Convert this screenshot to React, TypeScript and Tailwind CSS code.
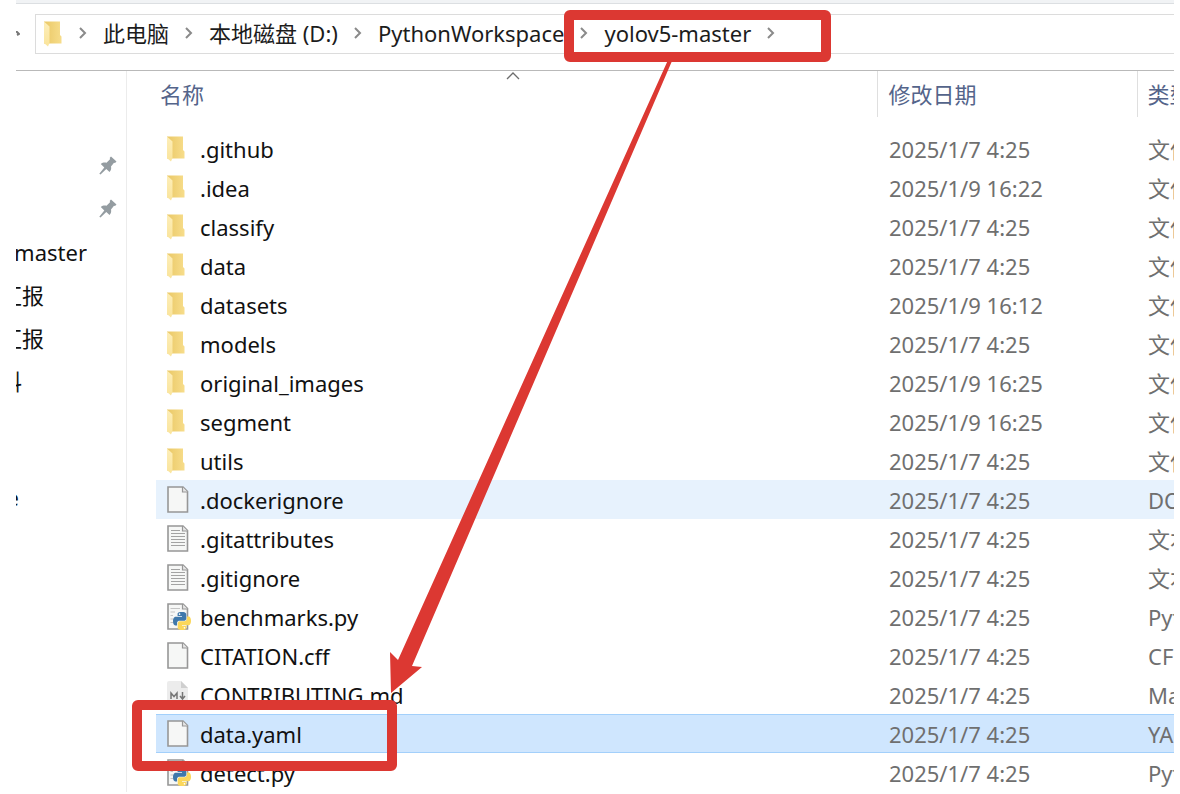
import type { ReactNode } from "react";

type Kind = "folder" | "blank" | "text" | "python" | "markdown";

type Entry = {
  name: string;
  date: string;
  type: string;
  kind: Kind;
  state?: "hover" | "selected";
};

const entries: Entry[] = [
  { name: ".github", date: "2025/1/7 4:25", type: "文件夹", kind: "folder" },
  { name: ".idea", date: "2025/1/9 16:22", type: "文件夹", kind: "folder" },
  { name: "classify", date: "2025/1/7 4:25", type: "文件夹", kind: "folder" },
  { name: "data", date: "2025/1/7 4:25", type: "文件夹", kind: "folder" },
  { name: "datasets", date: "2025/1/9 16:12", type: "文件夹", kind: "folder" },
  { name: "models", date: "2025/1/7 4:25", type: "文件夹", kind: "folder" },
  { name: "original_images", date: "2025/1/9 16:25", type: "文件夹", kind: "folder" },
  { name: "segment", date: "2025/1/9 16:25", type: "文件夹", kind: "folder" },
  { name: "utils", date: "2025/1/7 4:25", type: "文件夹", kind: "folder" },
  { name: ".dockerignore", date: "2025/1/7 4:25", type: "DOC", kind: "blank", state: "hover" },
  { name: ".gitattributes", date: "2025/1/7 4:25", type: "文本", kind: "text" },
  { name: ".gitignore", date: "2025/1/7 4:25", type: "文本", kind: "text" },
  { name: "benchmarks.py", date: "2025/1/7 4:25", type: "Pyt", kind: "python" },
  { name: "CITATION.cff", date: "2025/1/7 4:25", type: "CFF", kind: "blank" },
  { name: "CONTRIBUTING.md", date: "2025/1/7 4:25", type: "Mar", kind: "markdown" },
  { name: "data.yaml", date: "2025/1/7 4:25", type: "YAM", kind: "blank", state: "selected" },
  { name: "detect.py", date: "2025/1/7 4:25", type: "Pyt", kind: "python" },
];

const rowCls = {
  none: "",
  hover: "bg-[#e7f2fd]",
  selected: "bg-[#cfe6fe] shadow-[inset_0_1px_0_#a3d0fb,inset_0_-1px_0_#a3d0fb]",
};

function FolderIcon() {
  return (
    <svg width="18" height="26" viewBox="0 0 18 26" className="shrink-0" aria-hidden="true">
      <defs>
        <linearGradient id="folderBack" x1="0" x2="1" y1="0" y2="0">
          <stop offset="0" stopColor="#eac866" />
          <stop offset="1" stopColor="#f7dd8b" />
        </linearGradient>
        <linearGradient id="folderFlap" x1="0" x2="0" y1="0" y2="1">
          <stop offset="0" stopColor="#fdeeb9" />
          <stop offset="1" stopColor="#fae49b" />
        </linearGradient>
      </defs>
      <path d="M0 0.5H16V14L17.5 15.5V22.5H0Z" fill="url(#folderBack)" />
      <path d="M0 0.5L5.5 5.5V22L4 25.5L0 22Z" fill="url(#folderFlap)" />
    </svg>
  );
}

function Sheet({ children }: { children?: ReactNode }) {
  return (
    <svg width="25" height="28" viewBox="0 0 25 28" className="shrink-0" aria-hidden="true">
      <path d="M1 1H16L20.5 5.5V26H1Z" fill="#f6f7f6" stroke="#979797" strokeWidth="1.6" />
      <path d="M15.5 1V6H20.5" fill="#e6e6e6" stroke="#979797" strokeWidth="1.2" />
      {children}
    </svg>
  );
}

function FileIcon({ kind }: { kind: Kind }) {
  if (kind === "folder") return <FolderIcon />;
  if (kind === "blank") return <Sheet />;
  if (kind === "text") {
    return (
      <Sheet>
        <path
          d="M4 5.5H13M4 8.5H18M4 11.5H18M4 14.5H18M4 17.5H18M4 20.5H18"
          stroke="#a3a3a3"
          strokeWidth="1.2"
        />
      </Sheet>
    );
  }
  if (kind === "markdown") {
    return (
      <svg width="25" height="28" viewBox="0 0 25 28" className="shrink-0" aria-hidden="true">
        <path d="M2 0H14L21 7V26H2Q0 26 0 24V2Q0 0 2 0Z" fill="#ececec" />
        <path d="M14 0V7H21Z" fill="#cfcfcf" />
        <path
          d="M4 18V12L7 15.5L10 12V18M15.5 11V17.5M13 15L15.5 18L18 15"
          fill="none"
          stroke="#757575"
          strokeWidth="1.5"
        />
      </svg>
    );
  }
  return (
    <Sheet>
      <path d="M3.5 5.5H13M3.5 9H8M3.5 12.5H6M3.5 16H6M3.5 19.5H6" stroke="#c4c4c4" strokeWidth="1.2" />
      <svg x="6" y="9" width="18" height="18" viewBox="0 0 110 110">
        <path
          fill="#3f78ab"
          d="M54 0C26 0 28 12 28 12V25H55V29H18S0 27 0 55S15 82 15 82H25V68S24 53 40 53H66S81 53 81 39V14S83 0 54 0Z"
        />
        <path
          fill="#fbd75a"
          d="M56 110C84 110 82 98 82 98V85H55V81H92S110 83 110 55S95 28 95 28H85V42S86 57 70 57H44S29 57 29 71V96S27 110 56 110Z"
        />
        <circle cx="40" cy="13" r="5" fill="#fff" />
        <circle cx="70" cy="97" r="5" fill="#fff" />
      </svg>
    </Sheet>
  );
}

function Chevron() {
  return (
    <svg width="8" height="12" viewBox="0 0 8 12" className="shrink-0" aria-hidden="true">
      <path d="M1 1L6 6L1 11" fill="none" stroke="#8a8a8a" strokeWidth="2" />
    </svg>
  );
}

function Pin() {
  return (
    <svg width="18" height="19" viewBox="0 0 18 19" aria-label="已固定">
      <path
        d="M12 0.5L17.5 5.5L16 7L15 6.800L12 10.5C12.500 12.5 12 14.5 10.5 16L7.300 13L1.5 18.500L0.3 17.700L5.3 11.500L1.800 8C3.5 6.5 5.5 6.200 7.500 6.700L11 3.200L10.800 1.800Z"
        fill="#949ca1"
      />
    </svg>
  );
}

function AddressBar() {
  const crumb = "whitespace-nowrap hover:bg-[#e7f2fd]";
  return (
    <nav aria-label="路径" className="flex h-[67px] items-center border-b border-[#b9b9b9] pb-1.5">
      <div className="flex w-[19px] shrink-0 items-center">
        <svg width="4" height="6" viewBox="0 0 4 6" aria-hidden="true">
          <path d="M0 0L3 3L1 4" fill="none" stroke="#777" strokeWidth="2" />
        </svg>
      </div>
      <div className="flex h-10 flex-1 items-center border border-r-0 border-[#dcdcdc] pl-2 text-[#1c1c1c]">
        <FolderIcon />
        <div className="ml-[17px] flex items-center gap-4 pb-[3px]">
          <Chevron />
          <button className={crumb}>此电脑</button>
          <Chevron />
          <button className={crumb}>本地磁盘 (D:)</button>
          <Chevron />
          <button className={crumb}>PythonWorkspace</button>
          <Chevron />
          <button className={crumb}>yolov5-master</button>
          <Chevron />
        </div>
      </div>
    </nav>
  );
}

function Sidebar() {
  // names run off the left edge, so each one is aligned by its end
  const item = "flex h-[43px] items-center justify-end overflow-hidden whitespace-nowrap";
  return (
    <aside className="w-[111px] shrink-0 border-r border-[#ececec] pt-[73px]">
      <ul>
        <li className="flex h-[43px] items-center justify-end pr-[9px]">
          <Pin />
        </li>
        <li className="flex h-[43px] items-center justify-end pr-[9px]">
          <Pin />
        </li>
        <li className={`${item} w-[71px]`}>master</li>
        <li className={`${item} w-7`}>汇报</li>
        <li className={`${item} w-7`}>汇报</li>
        <li className={`${item} w-1.5`}>料</li>
        <li className={`${item} mt-[73px] w-[3px]`}>e</li>
      </ul>
    </aside>
  );
}

function FileTable() {
  const th = "h-[46px] p-0 text-left align-middle font-normal text-[#54648a]";
  return (
    <table className="w-full table-fixed border-collapse">
      <colgroup>
        <col />
        <col className="w-[260px]" />
        <col className="w-[37px]" />
      </colgroup>
      <thead>
        <tr>
          <th className={`${th} relative pl-1`}>
            名称
            <svg
              width="14"
              height="8"
              viewBox="0 0 14 8"
              className="absolute top-px left-1/2 -ml-2.5"
              aria-hidden="true"
            >
              <path d="M1 7L7 1L13 7" fill="none" stroke="#6d6d6d" strokeWidth="1.3" />
            </svg>
          </th>
          <th className={`${th} border-l border-[#dfdfdf] pl-[11px]`}>修改日期</th>
          <th className={`${th} overflow-hidden border-l border-[#dfdfdf] pl-[10px] whitespace-nowrap`}>类型</th>
        </tr>
        <tr className="h-3" />
      </thead>
      <tbody>
        {entries.map((e) => (
          <tr key={e.name} className={`h-[39px] ${rowCls[e.state ?? "none"]}`}>
            <td className="p-0">
              <div className="flex items-center">
                <span className="flex w-11 shrink-0 pl-[11px]">
                  <FileIcon kind={e.kind} />
                </span>
                <span className="text-[#111]">{e.name}</span>
              </div>
            </td>
            <td className="p-0 pl-3 text-[#6f6f6f]">{e.date}</td>
            <td className="overflow-hidden p-0 pl-[11px] whitespace-nowrap text-[#6f6f6f]">{e.type}</td>
          </tr>
        ))}
      </tbody>
    </table>
  );
}

function Annotations() {
  const frame = "absolute rounded-md border-[10px] border-[#dc3832]";
  return (
    <div className="pointer-events-none absolute inset-0">
      <div className={`${frame} top-[10px] left-[564px] h-[52px] w-[267px]`} />
      <div className={`${frame} top-[700px] left-[132px] h-[71px] w-[265px]`} />
      <svg className="absolute top-0 left-0" width="840" height="794" viewBox="0 0 840 794" aria-hidden="true">
        <path d="M668 60L672 61L412 666L422 667L391 693L390 652L398 660Z" fill="#dc3832" />
      </svg>
    </div>
  );
}

export default function App() {
  return (
    <div className="relative h-screen overflow-hidden bg-white pr-1.5 pl-4 font-['Noto_Sans','Noto_Sans_CJK_SC',sans-serif] text-[22px] leading-[30px] text-[#111]">
      <div className="h-1 border-b border-[#dcdfe2] bg-[#f1f3f5]" />
      <AddressBar />
      <div className="flex">
        <Sidebar />
        <main className="min-w-0 flex-1 overflow-hidden pl-[29px]">
          <FileTable />
        </main>
      </div>
      <Annotations />
    </div>
  );
}
